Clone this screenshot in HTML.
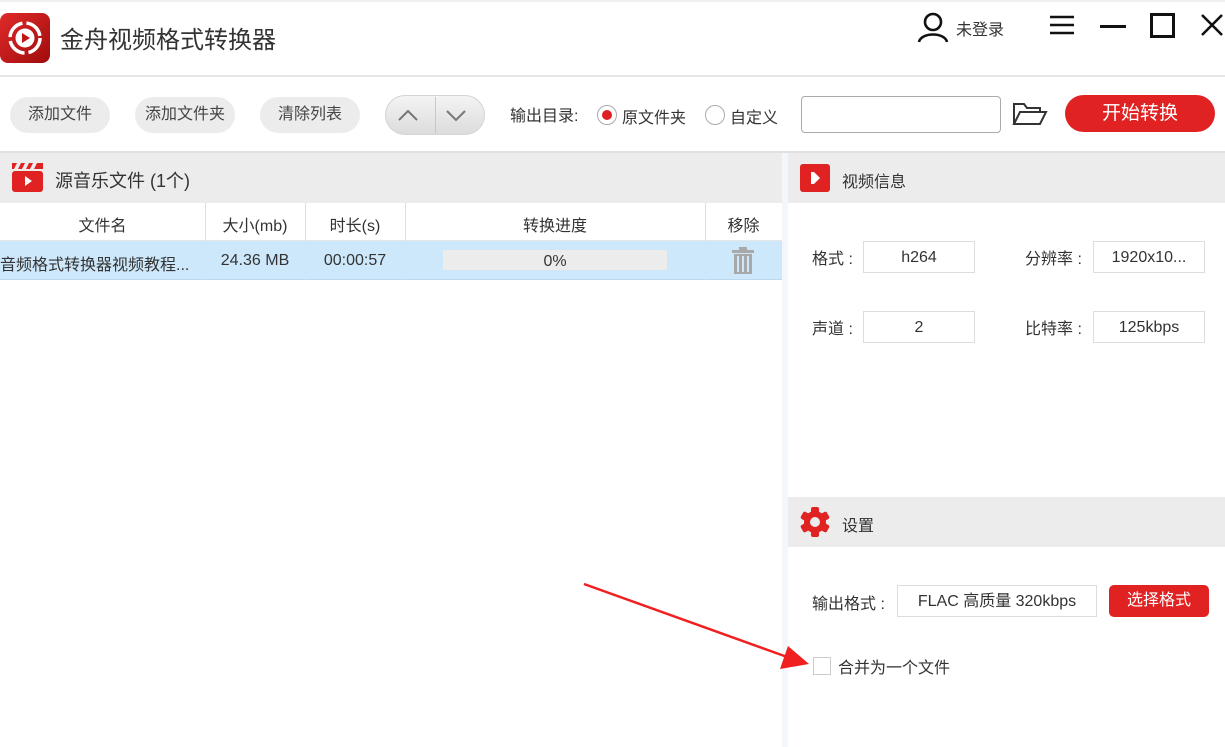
<!DOCTYPE html>
<html><head><meta charset="utf-8"><style>
*{margin:0;padding:0;box-sizing:border-box}
body{width:1225px;height:747px;overflow:hidden;background:#fff;font-family:"Liberation Sans","Noto Sans CJK SC",sans-serif;color:#333;position:relative}
.a{position:absolute}
.btn{position:absolute;top:97px;height:36px;border-radius:18px;background:#ececec;font-size:16px;line-height:36px;text-align:center;color:#444}
.hdr{background:#ececec}
.cell{position:absolute;text-align:center;font-size:16px}
.box{position:absolute;border:1px solid #ddd;background:#fff;text-align:center;font-size:16px;height:32px;line-height:32px;color:#333}
.lbl{position:absolute;font-size:16px;color:#333}
</style></head><body>
<div class="a" style="left:0;top:0;width:1225px;height:2px;background:#f0f0f0"></div>
<div class="a" style="left:0;top:13px;width:50px;height:50px;border-radius:8px;background:linear-gradient(135deg,#e02a2a,#a00c0c)"></div>
<svg class="a" style="left:0;top:13px" width="50" height="50" viewBox="0 0 50 50"><circle cx="25" cy="25" r="15" fill="none" stroke="#fff" stroke-width="3.5" stroke-dasharray="20 4"/><circle cx="25" cy="25" r="9.5" fill="#fff"/><path d="M22 20 L30 25 L22 30Z" fill="#c41515"/></svg>
<div class="a" style="left:60px;top:20px;font-size:24px;color:#333">金舟视频格式转换器</div>
<svg class="a" style="left:916px;top:10px" width="34" height="34" viewBox="0 0 34 34" fill="none" stroke="#111" stroke-width="2.6"><circle cx="17" cy="12" r="8"/><path d="M3 32 C5 22 29 22 31 32"/></svg>
<div class="a" style="left:956px;top:16px;font-size:16px;color:#333">未登录</div>
<svg class="a" style="left:1048px;top:14px" width="28" height="22"><g stroke="#111" stroke-width="2.6"><line x1="2" y1="3" x2="26" y2="3"/><line x1="2" y1="11" x2="26" y2="11"/><line x1="2" y1="19" x2="26" y2="19"/></g></svg>
<div class="a" style="left:1100px;top:25px;width:26px;height:3px;background:#111"></div>
<div class="a" style="left:1150px;top:13px;width:25px;height:25px;border:3px solid #111"></div>
<svg class="a" style="left:1200px;top:13px" width="24" height="24"><g stroke="#111" stroke-width="2.6"><line x1="2" y1="2" x2="22" y2="22"/><line x1="22" y1="2" x2="2" y2="22"/></g></svg>
<div class="a" style="left:0;top:75px;width:1225px;height:2px;background:#e6e6e6"></div>
<div class="btn" style="left:10px;width:100px">添加文件</div>
<div class="btn" style="left:135px;width:100px">添加文件夹</div>
<div class="btn" style="left:260px;width:100px">清除列表</div>
<div class="a" style="left:385px;top:95px;width:100px;height:40px;border-radius:20px;background:linear-gradient(#f4f4f4,#dcdcdc);border:1px solid #d4d4d4"></div>
<div class="a" style="left:435px;top:97px;width:1px;height:36px;background:#c8c8c8"></div>
<svg class="a" style="left:396px;top:105px" width="80" height="20" fill="none" stroke="#777" stroke-width="2"><path d="M3 15 L12 6 L21 15"/><path d="M51 6 L60 15 L69 6"/></svg>
<div class="a" style="left:510px;top:102px;font-size:16px">输出目录:</div>
<div class="a" style="left:597px;top:105px;width:20px;height:20px;border-radius:50%;border:1px solid #aaa;background:#fff"></div>
<div class="a" style="left:602px;top:110px;width:10px;height:10px;border-radius:50%;background:#e02020"></div>
<div class="a" style="left:622px;top:104px;font-size:16px">原文件夹</div>
<div class="a" style="left:705px;top:105px;width:20px;height:20px;border-radius:50%;border:1px solid #aaa;background:#fff"></div>
<div class="a" style="left:730px;top:104px;font-size:16px">自定义</div>
<div class="a" style="left:801px;top:96px;width:200px;height:37px;border:1px solid #aaa;border-radius:4px"></div>
<svg class="a" style="left:1012px;top:101px" width="36" height="26" fill="none" stroke="#333" stroke-width="2"><path d="M2 23 V3 H12 L15 7 H28 V11"/><path d="M2 23 L8 11 H34 L28 23 Z"/></svg>
<div class="a" style="left:1065px;top:95px;width:150px;height:37px;border-radius:19px;background:#e02222;color:#fff;font-size:19px;text-align:center;line-height:37px">开始转换</div>
<div class="a" style="left:0;top:151px;width:1225px;height:2px;background:#e0e0e0"></div>
<div class="a hdr" style="left:0;top:153px;width:782px;height:50px"></div>
<svg class="a" style="left:12px;top:163px" width="31" height="29"><rect x="0" y="8" width="31" height="21" rx="3" fill="#e02222"/><g fill="#e02222"><path d="M0 0 H31 V6 H0Z"/></g><g fill="#ececec"><path d="M5 0 L9 0 L6 6 L2 6Z M13 0 L17 0 L14 6 L10 6Z M21 0 L25 0 L22 6 L18 6Z"/></g><path d="M13 13 L20 18 L13 23Z" fill="#fff"/></svg>
<div class="a" style="left:55px;top:167px;font-size:18px">源音乐文件 (1个)</div>
<div class="a" style="left:0;top:203px;width:782px;height:38px;background:#fff;border-bottom:1px solid #e6e6e6"></div>
<div class="a" style="left:0;top:241px;width:782px;height:39px;background:#cde8fb;border-bottom:1px solid #bcd8ee"></div>
<div class="a" style="left:205px;top:203px;width:1px;height:77px;background:#e0e0e0"></div>
<div class="a" style="left:305px;top:203px;width:1px;height:77px;background:#e0e0e0"></div>
<div class="a" style="left:405px;top:203px;width:1px;height:77px;background:#e0e0e0"></div>
<div class="a" style="left:705px;top:203px;width:1px;height:77px;background:#e0e0e0"></div>
<div class="cell" style="left:0;top:212px;width:205px">文件名</div>
<div class="cell" style="left:205px;top:212px;width:100px">大小(mb)</div>
<div class="cell" style="left:305px;top:212px;width:100px">时长(s)</div>
<div class="cell" style="left:405px;top:212px;width:300px">转换进度</div>
<div class="cell" style="left:705px;top:212px;width:77px">移除</div>
<div class="a" style="left:0;top:251px;font-size:16px;white-space:nowrap">音频格式转换器视频教程...</div>
<div class="cell" style="left:205px;top:252px;width:100px">24.36 MB</div>
<div class="cell" style="left:305px;top:252px;width:100px">00:00:57</div>
<div class="a" style="left:443px;top:250px;width:224px;height:20px;background:#ececec;text-align:center;font-size:16px;line-height:24px">0%</div>
<svg class="a" style="left:732px;top:247px" width="22" height="27" fill="#a8a8a8"><rect x="0" y="3" width="22" height="3"/><rect x="7" y="0" width="8" height="3"/><path d="M2 7 H20 V27 H2Z M5 9 V25 H7 V9Z M10 9 V25 H12 V9Z M15 9 V25 H17 V9Z" fill-rule="evenodd"/></svg>
<div class="a" style="left:782px;top:153px;width:6px;height:594px;background:#f3f7fb"></div>
<div class="a hdr" style="left:788px;top:153px;width:437px;height:50px"></div>
<div class="a" style="left:800px;top:164px;width:30px;height:28px;border-radius:3px;background:#e02222"></div>
<svg class="a" style="left:800px;top:164px" width="30" height="28"><path d="M11 8 H14 L20 14 L14 20 H11Z" fill="#fff"/></svg>
<div class="a" style="left:842px;top:168px;font-size:16px">视频信息</div>
<div class="lbl" style="left:812px;top:245px">格式 :</div>
<div class="box" style="left:863px;top:241px;width:112px">h264</div>
<div class="lbl" style="left:1025px;top:245px">分辨率 :</div>
<div class="box" style="left:1093px;top:241px;width:112px">1920x10...</div>
<div class="lbl" style="left:812px;top:315px">声道 :</div>
<div class="box" style="left:863px;top:311px;width:112px">2</div>
<div class="lbl" style="left:1025px;top:315px">比特率 :</div>
<div class="box" style="left:1093px;top:311px;width:112px">125kbps</div>
<div class="a hdr" style="left:788px;top:497px;width:437px;height:50px"></div>
<svg class="a" style="left:800px;top:507px" width="30" height="30"><g fill="#e02222"><circle cx="15" cy="15" r="11"/><g transform="translate(15 15)"><rect x="-4" y="-15" width="8" height="30" rx="2"/><rect x="-4" y="-15" width="8" height="30" rx="2" transform="rotate(60)"/><rect x="-4" y="-15" width="8" height="30" rx="2" transform="rotate(120)"/></g></g><circle cx="15" cy="15" r="5" fill="#ececec"/></svg>
<div class="a" style="left:842px;top:512px;font-size:16px">设置</div>
<div class="lbl" style="left:812px;top:590px">输出格式 :</div>
<div class="box" style="left:897px;top:585px;width:200px">FLAC 高质量 320kbps</div>
<div class="a" style="left:1109px;top:585px;width:100px;height:32px;border-radius:5px;background:#e02222;color:#fff;font-size:16px;text-align:center;line-height:32px">选择格式</div>
<div class="a" style="left:813px;top:657px;width:18px;height:18px;border:1px solid #ccc"></div>
<div class="lbl" style="left:838px;top:654px">合并为一个文件</div>
<svg class="a" style="left:580px;top:580px" width="240" height="95"><line x1="4" y1="4" x2="210" y2="78" stroke="#f02020" stroke-width="2.5"/><path d="M229 84 L200 89 L208 66Z" fill="#f02020"/></svg>
</body></html>
